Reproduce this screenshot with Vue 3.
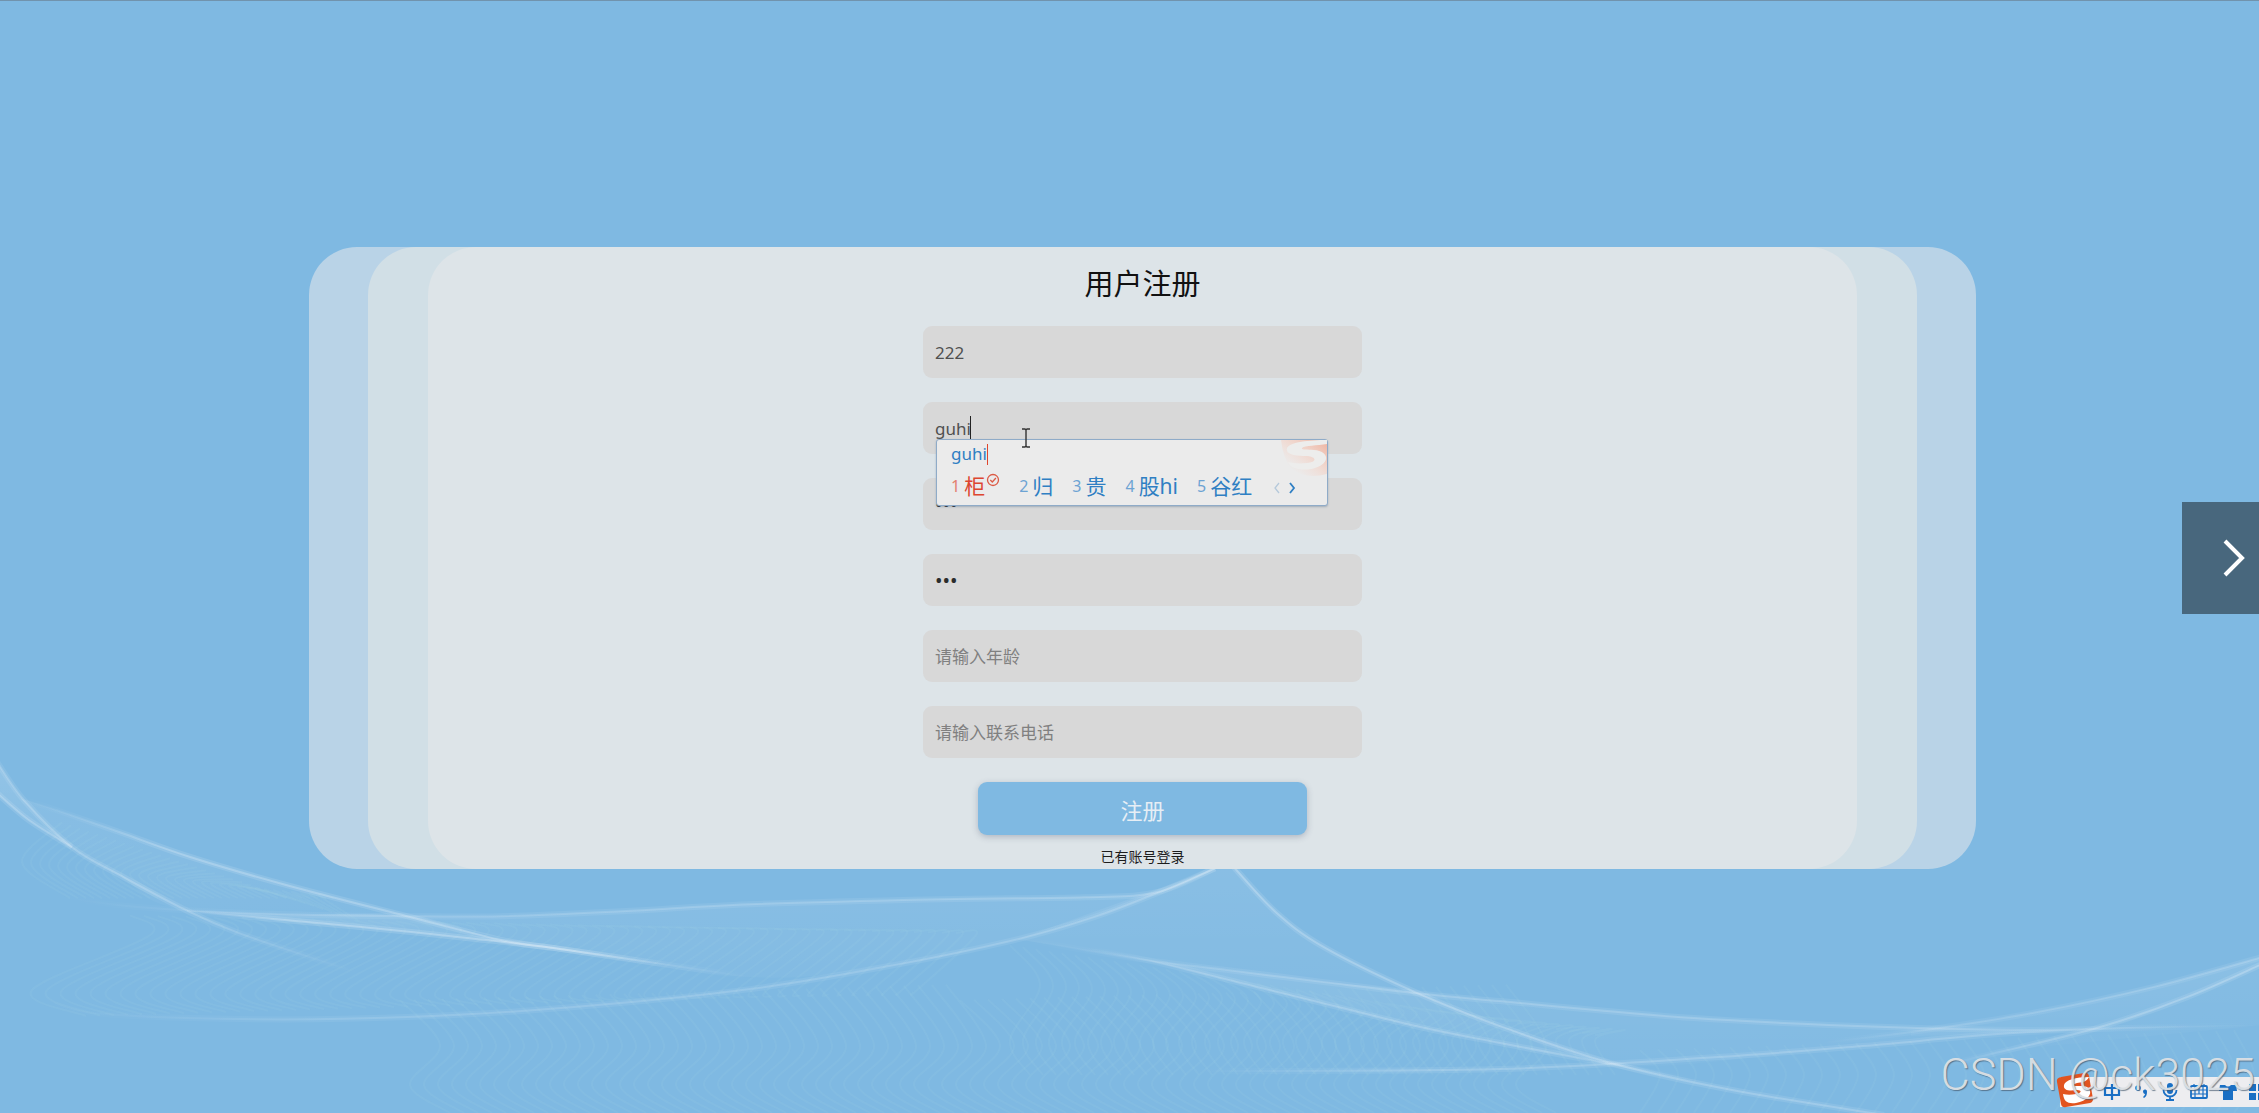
<script setup>
import { ref } from 'vue'

const form = ref({ account: '222', name: 'guhi', password: '222', confirm: '222', age: '', phone: '' })

const candidates = [
  { n: 1, text: '柜', active: true },
  { n: 2, text: '归' },
  { n: 3, text: '贵' },
  { n: 4, text: '股hi' },
  { n: 5, text: '谷红' },
]

// Smooth path through a list of points (Catmull-Rom to cubic Bezier).
function smooth(p) {
  let d = `M${p[0][0]} ${p[0][1]}`
  for (let i = 0; i < p.length - 1; i++) {
    const a = p[i - 1] || p[i]
    const b = p[i]
    const c = p[i + 1]
    const e = p[i + 2] || c
    d += ` C${b[0] + (c[0] - a[0]) / 6} ${b[1] + (c[1] - a[1]) / 6} ${c[0] - (e[0] - b[0]) / 6} ${c[1] - (e[1] - b[1]) / 6} ${c[0]} ${c[1]}`
  }
  return d
}
const area = (top, bottom) => smooth(top) + smooth([...bottom].reverse()).replace('M', ' L') + 'Z'

const fallLeft = [[-4, 760], [24, 800], [72, 847], [120, 875], [182, 908], [239, 933], [359, 973]]
const joinLeft = [[-4, 792], [29, 820], [72, 847]]
const slope = [[20, 798], [57, 810], [120, 832], [191, 857], [287, 885], [407, 916], [502, 940], [555, 948], [670, 965], [750, 977]]
const ridge = [[62, 897], [120, 905], [187, 910], [287, 914], [407, 916], [502, 916], [622, 911], [750, 904], [941, 899], [1085, 897], [1157, 892], [1215, 868]]
const under = [[187, 911], [287, 920], [383, 929], [478, 939], [555, 948], [670, 965]]
const basin = [[34, 990], [86, 1012], [239, 1019], [407, 1017], [574, 1007], [750, 989], [894, 965], [1018, 939], [1094, 917], [1157, 893], [1215, 868]]
const peak = [[1233, 866], [1276, 912], [1324, 947], [1415, 992], [1500, 1026], [1611, 1063], [1732, 1090], [1884, 1115]]
const crest = [[1018, 938], [1085, 950], [1147, 960], [1228, 970], [1324, 982], [1415, 993], [1500, 1001], [1694, 1018], [1887, 1027], [2032, 1030], [2129, 1028], [2262, 1025]]
const fold = [[1085, 948], [1147, 960], [1209, 975], [1310, 1000], [1420, 1027], [1500, 1043], [1621, 1066], [1700, 1082]]
const low = [[1200, 1071], [1500, 1069], [1718, 1057], [1863, 1046], [1984, 1035], [2090, 1029], [2200, 1026]]
const rise = [[1820, 1043], [1911, 1032], [2032, 1013], [2153, 987], [2262, 957]]
const riseLow = [[1940, 1066], [2008, 1050], [2100, 1027], [2187, 997], [2262, 964]]

const lines = [
  { d: smooth(fallLeft), o: 0.22, f: 'fade-end' },
  { d: smooth(joinLeft), o: 0.22, f: 'solid' },
  { d: smooth(slope), o: 0.22, f: 'fade-both' },
  { d: smooth(ridge), o: 0.18, f: 'fade-start' },
  { d: smooth(under), o: 0.24, f: 'fade-both' },
  { d: smooth(basin), o: 0.16, f: 'fade-start' },
  { d: smooth(peak), o: 0.22, f: 'solid' },
  { d: smooth(crest), o: 0.16, f: 'fade-both' },
  { d: smooth(fold), o: 0.18, f: 'fade-both' },
  { d: smooth(low), o: 0.16, f: 'fade-both' },
  { d: smooth(rise), o: 0.16, f: 'fade-start' },
  { d: smooth(riseLow), o: 0.22, f: 'fade-start' },
]

const areas = [
  { d: area(fallLeft.slice(0, 3), joinLeft), o: 0.16 },
  { d: area([[20, 798], [57, 810], [191, 857], [287, 885], [407, 916]], [[72, 847], [120, 875], [187, 910], [407, 916]]), o: 0.07 },
  { d: area([[187, 910], [287, 914], [407, 916], [502, 940], [555, 948]], under.slice(0, 5)), o: 0.13 },
  { d: area(ridge.slice(4), [[407, 916], [555, 948], [750, 977], [894, 965], [1018, 939], [1094, 917], [1157, 893], [1215, 868]]), o: 0.08 },
  { d: area([[1215, 868], [1233, 866], [1276, 912], [1324, 947], [1415, 992]], [[1018, 939], [1147, 960], [1228, 970], [1324, 982], [1415, 993]]), o: 0.08 },
  { d: area([[1147, 960], [1228, 970], [1324, 982], [1415, 993], [1500, 1026], [1621, 1064]], fold.slice(1, 7)), o: 0.1 },
  { d: area(crest.slice(5), [[1415, 993], [1500, 1026], [1621, 1066], [1863, 1046], [2090, 1029], [2262, 1025]]), o: 0.06 },
  { d: area(rise.slice(1), [[1911, 1036], [2090, 1029], [2187, 997], [2262, 964]]), o: 0.1 },
  { d: area(riseLow.slice(1), [[2008, 1050], [2262, 1025]]), o: 0.05 },
]

const range = (n) => Array.from({ length: n }, (_, i) => i)

// Fine ripples that hang between the large waves.
const ripples = [
  ...range(34).map((i) => smooth([[62 + i * 9, 822 + i * 3], [22 + i * 9, 862 + i], [70 + i * 8, 898]])),
  ...range(60).map((i) => smooth([[130 + i * 14, 915 + i * 0.3], [150 + i * 14, 935], [32 + i * 15, 990], [86 + i * 14, 1016 - i * 0.4]])),
  ...range(80).map((i) => smooth([[400 + i * 14, 1000 - (i % 40) * 0.4], [440 + i * 14, 1045], [410 + i * 14, 1085], [450 + i * 14, 1113]])),
  ...range(46).map((i) => smooth([[1010 + i * 13, 945 + i * 2], [1040 + i * 13, 985 + i], [1010 + i * 13, 1040], [1030 + i * 13, 1075]])),
  ...range(34).map((i) => smooth([[1640 + i * 18, 1050 - i * 0.6], [1660 + i * 18, 1075], [1640 + i * 18, 1113]])),
]
</script>

<template>
  <div class="page">
    <svg class="waves" viewBox="0 0 2259 1113" preserveAspectRatio="none" aria-hidden="true">
      <defs>
        <linearGradient id="glow" x1="0" y1="0" x2="0" y2="1">
          <stop offset="0" stop-color="#fff" stop-opacity="1" />
          <stop offset="1" stop-color="#fff" stop-opacity="0.35" />
        </linearGradient>
        <linearGradient id="solid">
          <stop offset="0" stop-color="#fff" />
          <stop offset="1" stop-color="#fff" stop-opacity="0.8" />
        </linearGradient>
        <linearGradient id="fade-start">
          <stop offset="0" stop-color="#fff" stop-opacity="0" />
          <stop offset="0.25" stop-color="#fff" stop-opacity="0.7" />
          <stop offset="1" stop-color="#fff" />
        </linearGradient>
        <linearGradient id="fade-end">
          <stop offset="0" stop-color="#fff" stop-opacity="0.7" />
          <stop offset="0.4" stop-color="#fff" />
          <stop offset="1" stop-color="#fff" stop-opacity="0" />
        </linearGradient>
        <linearGradient id="fade-both">
          <stop offset="0" stop-color="#fff" stop-opacity="0" />
          <stop offset="0.2" stop-color="#fff" />
          <stop offset="0.75" stop-color="#fff" />
          <stop offset="1" stop-color="#fff" stop-opacity="0" />
        </linearGradient>
      </defs>
      <path v-for="(a, i) in areas" :key="'a' + i" :d="a.d" :opacity="a.o" fill="url(#glow)" />
      <path v-for="(r, i) in ripples" :key="'r' + i" :d="r" class="ripple" />
      <path v-for="(l, i) in lines" :key="'h' + i" :d="l.d" class="halo" :stroke="`url(#${l.f})`" :opacity="l.o * 0.5" />
      <path v-for="(l, i) in lines" :key="'l' + i" :d="l.d" class="line" :stroke="`url(#${l.f})`" :opacity="l.o" />
    </svg>

    <main class="stage">
      <div class="layer outer">
        <div class="layer middle">
          <form class="layer inner" @submit.prevent>
            <h1>用户注册</h1>
            <div class="field">
              <input v-model="form.account" type="text" aria-label="账号" />
            </div>
            <div class="field">
              <input v-model="form.name" type="text" aria-label="姓名" />
              <span class="caret"></span>
              <svg class="pointer" viewBox="0 0 10 20" aria-hidden="true">
                <path d="M1 1h3l1 1 1-1h3M1 19h3l1-1 1 1h3M5 2v16" fill="none" stroke="#333" stroke-width="1.4" />
              </svg>
              <div class="ime">
                <svg class="ime-mark" viewBox="0 0 46 36" aria-hidden="true">
                  <defs>
                    <linearGradient id="mark" x1="0" y1="1" x2="1" y2="0">
                      <stop offset="0.2" stop-color="#f3dcd4" stop-opacity="0" />
                      <stop offset="0.55" stop-color="#f2d3c8" stop-opacity="0.7" />
                      <stop offset="1" stop-color="#eeb09c" />
                    </linearGradient>
                  </defs>
                  <path d="M0 0H46V34Q24 40 10 28Q2 18 0 0Z" fill="url(#mark)" />
                  <path d="M46 0C28 0 9 2 6 8C4 15 16 16 26 16C36 17 36 22 26 23C18 24 11 23 7 22C10 30 24 31 34 28C50 23 48 11 33 10C26 9 20 10 21 8C24 5 36 6 46 4Z" fill="#ededec" />
                </svg>
                <div class="typed">guhi<i></i></div>
                <div class="choices">
                  <span v-for="c in candidates" :key="c.n" class="choice" :class="{ active: c.active }">
                    <small>{{ c.n }}</small><b>{{ c.text }}</b>
                    <svg v-if="c.active" class="tick" viewBox="0 0 14 14" aria-hidden="true">
                      <circle cx="7" cy="7" r="5.5" fill="none" stroke="#dc5a45" stroke-width="1.3" />
                      <path d="M4.3 7l2 2 3.6-4" fill="none" stroke="#dc5a45" stroke-width="1.3" />
                    </svg>
                  </span>
                  <svg class="pager" viewBox="0 0 24 14" aria-hidden="true">
                    <path d="M6 2L2 7l4 5" fill="none" stroke="#b5c9db" stroke-width="1.3" />
                    <path d="M17 2l4 5-4 5" fill="none" stroke="#2f7fc3" stroke-width="1.8" />
                  </svg>
                </div>
              </div>
            </div>
            <div class="field">
              <input v-model="form.password" type="password" aria-label="密码" autocomplete="off" />
            </div>
            <div class="field">
              <input v-model="form.confirm" type="password" aria-label="确认密码" autocomplete="off" />
            </div>
            <div class="field">
              <input v-model="form.age" type="text" placeholder="请输入年龄" aria-label="年龄" />
            </div>
            <div class="field">
              <input v-model="form.phone" type="text" placeholder="请输入联系电话" aria-label="联系电话" />
            </div>
            <button class="submit" type="submit">注册</button>
            <a class="login" href="#">已有账号登录</a>
          </form>
        </div>
      </div>
    </main>

    <button class="next" type="button" aria-label="下一张">
      <svg viewBox="0 0 24 40" aria-hidden="true">
        <path d="M3 3l17 17L3 37" fill="none" stroke="#fff" stroke-width="4" />
      </svg>
    </button>

    <div class="toolbar">
      <svg class="logo" viewBox="0 0 38 36" aria-hidden="true">
        <path d="M5 5L28 1Q32 0 33 4L37 27Q37 30 34 31L10 35Q6 36 5 32L1 10Q0 6 5 5Z" fill="#e2541f" />
        <path d="M33 5C20 5 9 8 8 13C7 19 14 19 21 18C26 18 26 21 20 22C15 23 11 23 7 22C8 30 12 32 20 31C31 29 37 22 33 17C31 13 25 14 19 14C16 14 17 12 21 11C25 10 30 11 33 5Z" fill="#fff" />
      </svg>
      <svg class="tool" viewBox="0 0 18 18" aria-hidden="true">
        <path d="M2 5h14v7H2zM9 1v16" fill="none" stroke="#1a6fc4" stroke-width="2.2" />
      </svg>
      <svg class="tool" viewBox="0 0 18 18" aria-hidden="true">
        <circle cx="6" cy="5" r="2" fill="none" stroke="#1a6fc4" stroke-width="1.6" />
        <path d="M11 8a2 2 0 1 1 4 1c0 3-1 5-3 6l-1-1c1-1 2-2 2-3-1 0-2-1-2-3z" fill="#1a6fc4" />
      </svg>
      <svg class="tool" viewBox="0 0 18 18" aria-hidden="true">
        <rect x="6" y="0" width="6" height="11" rx="3" fill="#1a6fc4" />
        <path d="M2.500 7a6.500 6.500 0 0 0 13 0M9 13v4M5 17h8" fill="none" stroke="#1a6fc4" stroke-width="1.8" />
      </svg>
      <svg class="tool" viewBox="0 0 18 18" aria-hidden="true">
        <rect x="1" y="3" width="16" height="12" rx="1" fill="none" stroke="#1a6fc4" stroke-width="1.8" />
        <path d="M1 7h16M1 11h16M5 3v12M9 3v8M13 3v12M4 1v2M14 1v2" stroke="#1a6fc4" stroke-width="1.2" />
      </svg>
      <svg class="tool" viewBox="0 0 18 18" aria-hidden="true">
        <path d="M1 2h5q3 3 6 0h5l1 6h-4v9H4V8H0z" fill="#1a6fc4" />
      </svg>
      <svg class="tool" viewBox="0 0 18 18" aria-hidden="true">
        <path d="M1 1h7v7H1zM10 1h7v7h-7zM1 10h7v7H1zM10 10h7v7h-7z" fill="#1a6fc4" />
      </svg>
    </div>
    <div class="watermark">CSDN @ck3025</div>
  </div>
</template>

<style>
body {
  margin: 0;
  background: #7fb9e2;
}
</style>

<style scoped>
.page {
  position: relative;
  box-sizing: border-box;
  min-height: 100vh;
  padding-top: 2px;
  display: flex;
  align-items: center;
  overflow: hidden;
  background: #7fb9e2;
  border-top: 1px solid #7193ad;
  font-family: "Noto Sans", "Noto Sans CJK SC", sans-serif;
  color: #1c1c1c;
}
.waves {
  position: absolute;
  inset: 0;
  width: 100%;
  height: 100%;
}
.line {
  fill: none;
  stroke-width: 2;
}
.halo {
  fill: none;
  stroke-width: 6;
}
.ripple {
  fill: none;
  stroke: #a5d3e8;
  stroke-width: 2;
  opacity: 0.12;
}
.stage {
  position: relative;
  flex: 1;
  display: grid;
  grid-template-columns: 309fr 1667fr 283fr;
}
.layer {
  border-radius: 48px;
}
.outer {
  grid-column: 2;
  padding: 0 59px;
  background: #b9d3e7;
}
.middle {
  padding: 0 60px;
  background: #d1dfe6;
}
.inner {
  display: flex;
  flex-direction: column;
  align-items: center;
  padding: 17px 0 2px;
  background: #dde4e8;
}
h1 {
  margin: 0 0 22px;
  font-size: 29px;
  line-height: 40px;
  font-weight: 400;
  color: #111;
}
.field {
  position: relative;
  width: 439px;
  max-width: 100%;
  margin-bottom: 24px;
}
.field input {
  display: block;
  box-sizing: border-box;
  width: 100%;
  height: 52px;
  padding: 0 12px;
  border: 0;
  border-radius: 9px;
  outline: none;
  background: #d8d8d8;
  font: inherit;
  font-size: 17px;
  color: #505050;
}
.field input[type="password"] {
  font-size: 20px;
  color: #2c2c2c;
}
.field input::placeholder {
  color: #808080;
  opacity: 1;
}
.caret {
  position: absolute;
  left: 47px;
  top: 14px;
  width: 1px;
  height: 23px;
  background: #222;
}
.pointer {
  position: absolute;
  left: 98px;
  top: 26px;
  width: 10px;
  height: 20px;
  z-index: 3;
}
.ime {
  position: absolute;
  z-index: 2;
  left: 13px;
  top: 37px;
  box-sizing: border-box;
  width: 392px;
  height: 67px;
  padding: 2px 0 0 14px;
  border: 1px solid #8fabc8;
  border-radius: 3px;
  background: #ebebeb;
  box-shadow: 0 1px 2px rgba(80, 110, 140, 0.4);
  color: #2f7fc3;
}
.ime-mark {
  position: absolute;
  right: 0;
  top: 0;
  width: 46px;
  height: 36px;
}
.typed {
  display: flex;
  align-items: center;
  height: 24px;
  font-size: 17px;
  line-height: 24px;
}
.typed i {
  width: 1px;
  height: 21px;
  background: #e0452c;
}
.choices {
  display: flex;
  align-items: center;
  gap: 19px;
  height: 40px;
}
.choice {
  display: flex;
  align-items: center;
  gap: 4px;
  line-height: 30px;
}
.choice small {
  font-size: 16px;
  color: #6da3d3;
}
.choice b {
  font-size: 21px;
  font-weight: 400;
}
.choice.active b {
  color: #dd4630;
}
.choice.active small {
  color: #e3806f;
}
.tick {
  width: 14px;
  height: 14px;
  margin: 0 0 12px -3px;
}
.pager {
  width: 24px;
  height: 14px;
  margin: 4px 0 0 2px;
}
.submit {
  width: 329px;
  max-width: 100%;
  height: 53px;
  padding: 0;
  border: 0;
  border-radius: 9px;
  background: #7fb9e2;
  box-shadow: 0 2px 6px rgba(70, 80, 110, 0.3);
  font: inherit;
  font-size: 22px;
  color: #e6eef5;
}
.login {
  margin-top: 12px;
  font-size: 14px;
  line-height: 20px;
  color: #1c1c1c;
  text-decoration: none;
}
.next {
  position: absolute;
  right: 0;
  top: 50%;
  width: 77px;
  height: 112px;
  margin-top: -55px;
  padding: 0 0 0 26px;
  border: 0;
  background: #48677d;
}
.next svg {
  display: block;
  width: 24px;
  height: 40px;
  margin: 0 auto;
}
.toolbar {
  position: absolute;
  right: -7px;
  bottom: 6px;
  display: flex;
  align-items: center;
  gap: 11px;
  height: 30px;
  background: #ededf0;
}
.logo {
  width: 38px;
  height: 36px;
  margin: -4px -2px 0 -4px;
}
.tool {
  width: 18px;
  height: 18px;
}
.watermark {
  position: absolute;
  right: 4px;
  bottom: 11px;
  font-family: Roboto, "Liberation Sans", sans-serif;
  font-weight: 300;
  font-size: 45px;
  line-height: 54px;
  color: rgba(222, 226, 230, 0.95);
  text-shadow: 1px 1px 1px rgba(70, 90, 110, 0.7);
}
</style>
